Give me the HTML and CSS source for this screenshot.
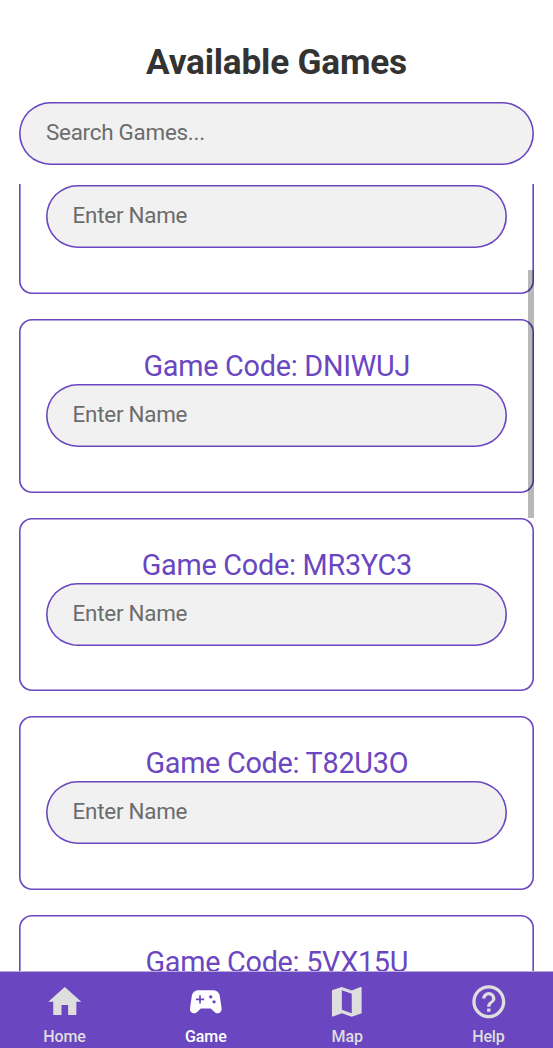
FILE: index.html
```html
<!DOCTYPE html>
<html lang="en">
<head>
<meta charset="utf-8">
<title>Available Games</title>
<link rel="stylesheet" href="styles.css">
</head>
<body>
<div class="app">
  <main class="screen">
    <h1 class="title">Available Games</h1>
    <input class="field search" type="text" placeholder="Search Games...">
    <div class="viewport">
      <div class="list">
        <section class="card"><div class="code"></div><input class="field" type="text" placeholder="Enter Name"></section>
        <section class="card"><h2 class="code">Game Code: DNIWUJ</h2><input class="field" type="text" placeholder="Enter Name"></section>
        <section class="card"><h2 class="code">Game Code: MR3YC3</h2><input class="field" type="text" placeholder="Enter Name"></section>
        <section class="card"><h2 class="code">Game Code: T82U3O</h2><input class="field" type="text" placeholder="Enter Name"></section>
        <section class="card"><h2 class="code">Game Code: 5VX15U</h2><input class="field" type="text" placeholder="Enter Name"></section>
      </div>
      <div class="scrollbar"></div>
    </div>
  </main>
  <nav class="tabs">
    <a class="tab"><svg class="icon" viewBox="0 0 24 24"><path d="M10 20v-6h4v6h5v-8h3L12 3 2 12h3v8z"/></svg><span>Home</span></a>
    <a class="tab active"><svg class="icon" viewBox="0 0 24 24"><path d="M21.58 16.09l-1.09-7.66C20.21 6.46 18.52 5 16.53 5H7.47C5.48 5 3.79 6.46 3.51 8.43l-1.09 7.66C2.2 17.63 3.39 19 4.94 19c.68 0 1.32-.27 1.8-.75L9 16h6l2.25 2.25c.48.48 1.13.75 1.8.75 1.56 0 2.75-1.37 2.53-2.91zM11 11H9v2H8v-2H6v-1h2V8h1v2h2v1zm4-1c-.55 0-1-.45-1-1s.45-1 1-1 1 .45 1 1-.45 1-1 1zm2 3c-.55 0-1-.45-1-1s.45-1 1-1 1 .45 1 1-.45 1-1 1z"/></svg><span>Game</span></a>
    <a class="tab"><svg class="icon" viewBox="0 0 24 24"><path d="M20.5 3l-.16.03L15 5.1 9 3 3.36 4.9c-.21.07-.36.25-.36.48V20.5c0 .28.22.5.5.5l.16-.03L9 18.9l6 2.1 5.64-1.9c.21-.07.36-.25.36-.48V3.5c0-.28-.22-.5-.5-.5zM15 19l-6-2.11V5l6 2.11V19z"/></svg><span>Map</span></a>
    <a class="tab"><svg class="icon" viewBox="0 0 24 24"><path d="M11 18h2v-2h-2v2zm1-16C6.48 2 2 6.48 2 12s4.48 10 10 10 10-4.48 10-10S17.52 2 12 2zm0 18c-4.41 0-8-3.59-8-8s3.59-8 8-8 8 3.59 8 8-3.59 8-8 8zm0-14c-2.21 0-4 1.79-4 4h2c0-1.1.9-2 2-2s2 .9 2 2c0 2-3 1.75-3 5h2c0-2.25 3-2.5 3-5 0-2.21-1.79-4-4-4z"/></svg><span>Help</span></a>
  </nav>
</div>
</body>
</html>
```
FILE: styles.css
```css
* { box-sizing: border-box; }
body {
  margin: 0;
  background: #fff;
  font-family: Roboto, sans-serif;
}
.app {
  height: 1048px;
  display: flex;
  flex-direction: column;
  overflow: hidden;
}
.screen {
  flex: 1;
  min-height: 0;
  display: flex;
  flex-direction: column;
  padding: 40px 19px 0;
}
.title {
  margin: 0 0 18px;
  font-size: 35.2px;
  line-height: 44px;
  font-weight: 700;
  letter-spacing: -0.2px;
  color: #333;
  text-align: center;
}
.field {
  display: block;
  flex: none;
  width: 100%;
  height: 63px;
  margin: 0;
  padding: 0 26.5px 3px 27px;
  border: 0;
  border-radius: 32px;
  background: #f1f1f1;
  box-shadow: inset 0 0 0 1.6px #6b46c1;
  font-family: inherit;
  font-size: 22.4px;
  letter-spacing: -0.25px;
  outline: none;
}
.field::placeholder { color: #6c6c6c; opacity: 1; }
.search { margin-bottom: 19px; }
.viewport {
  position: relative;
  flex: 1;
  min-height: 0;
  overflow: hidden;
}
.list {
  display: flex;
  flex-direction: column;
  gap: 25px;
  margin-top: -63.6px;
}
.card {
  flex: none;
  height: 173.7px;
  padding: 30px 27px 0 26.6px;
  border-radius: 13px;
  box-shadow: inset 0 0 0 1.6px #6b46c1;
}
.code {
  margin: 0;
  padding-left: 1px;
  height: 35px;
  line-height: 35px;
  font-size: 28.8px;
  font-weight: 400;
  letter-spacing: -0.27px;
  color: #6b46c1;
  text-align: center;
}
.scrollbar {
  position: absolute;
  top: 86px;
  right: 0;
  width: 6px;
  height: 248px;
  background: rgba(0, 0, 0, 0.28);
}
.tabs {
  flex: none;
  height: 77px;
  display: flex;
  justify-content: center;
  background: #6b46c1;
  border-top: 1px solid #b6a9d8;
}
.tab {
  flex: 0 0 141.3px;
  display: flex;
  flex-direction: column;
  align-items: center;
  padding-top: 10px;
  color: #dedede;
  font-size: 16px;
  line-height: 20px;
  font-weight: 500;
  letter-spacing: -0.1px;
}
.tab.active { color: #fff; }
.icon {
  width: 39.6px;
  height: 39.6px;
  margin-bottom: 5.4px;
  fill: currentColor;
}
```
